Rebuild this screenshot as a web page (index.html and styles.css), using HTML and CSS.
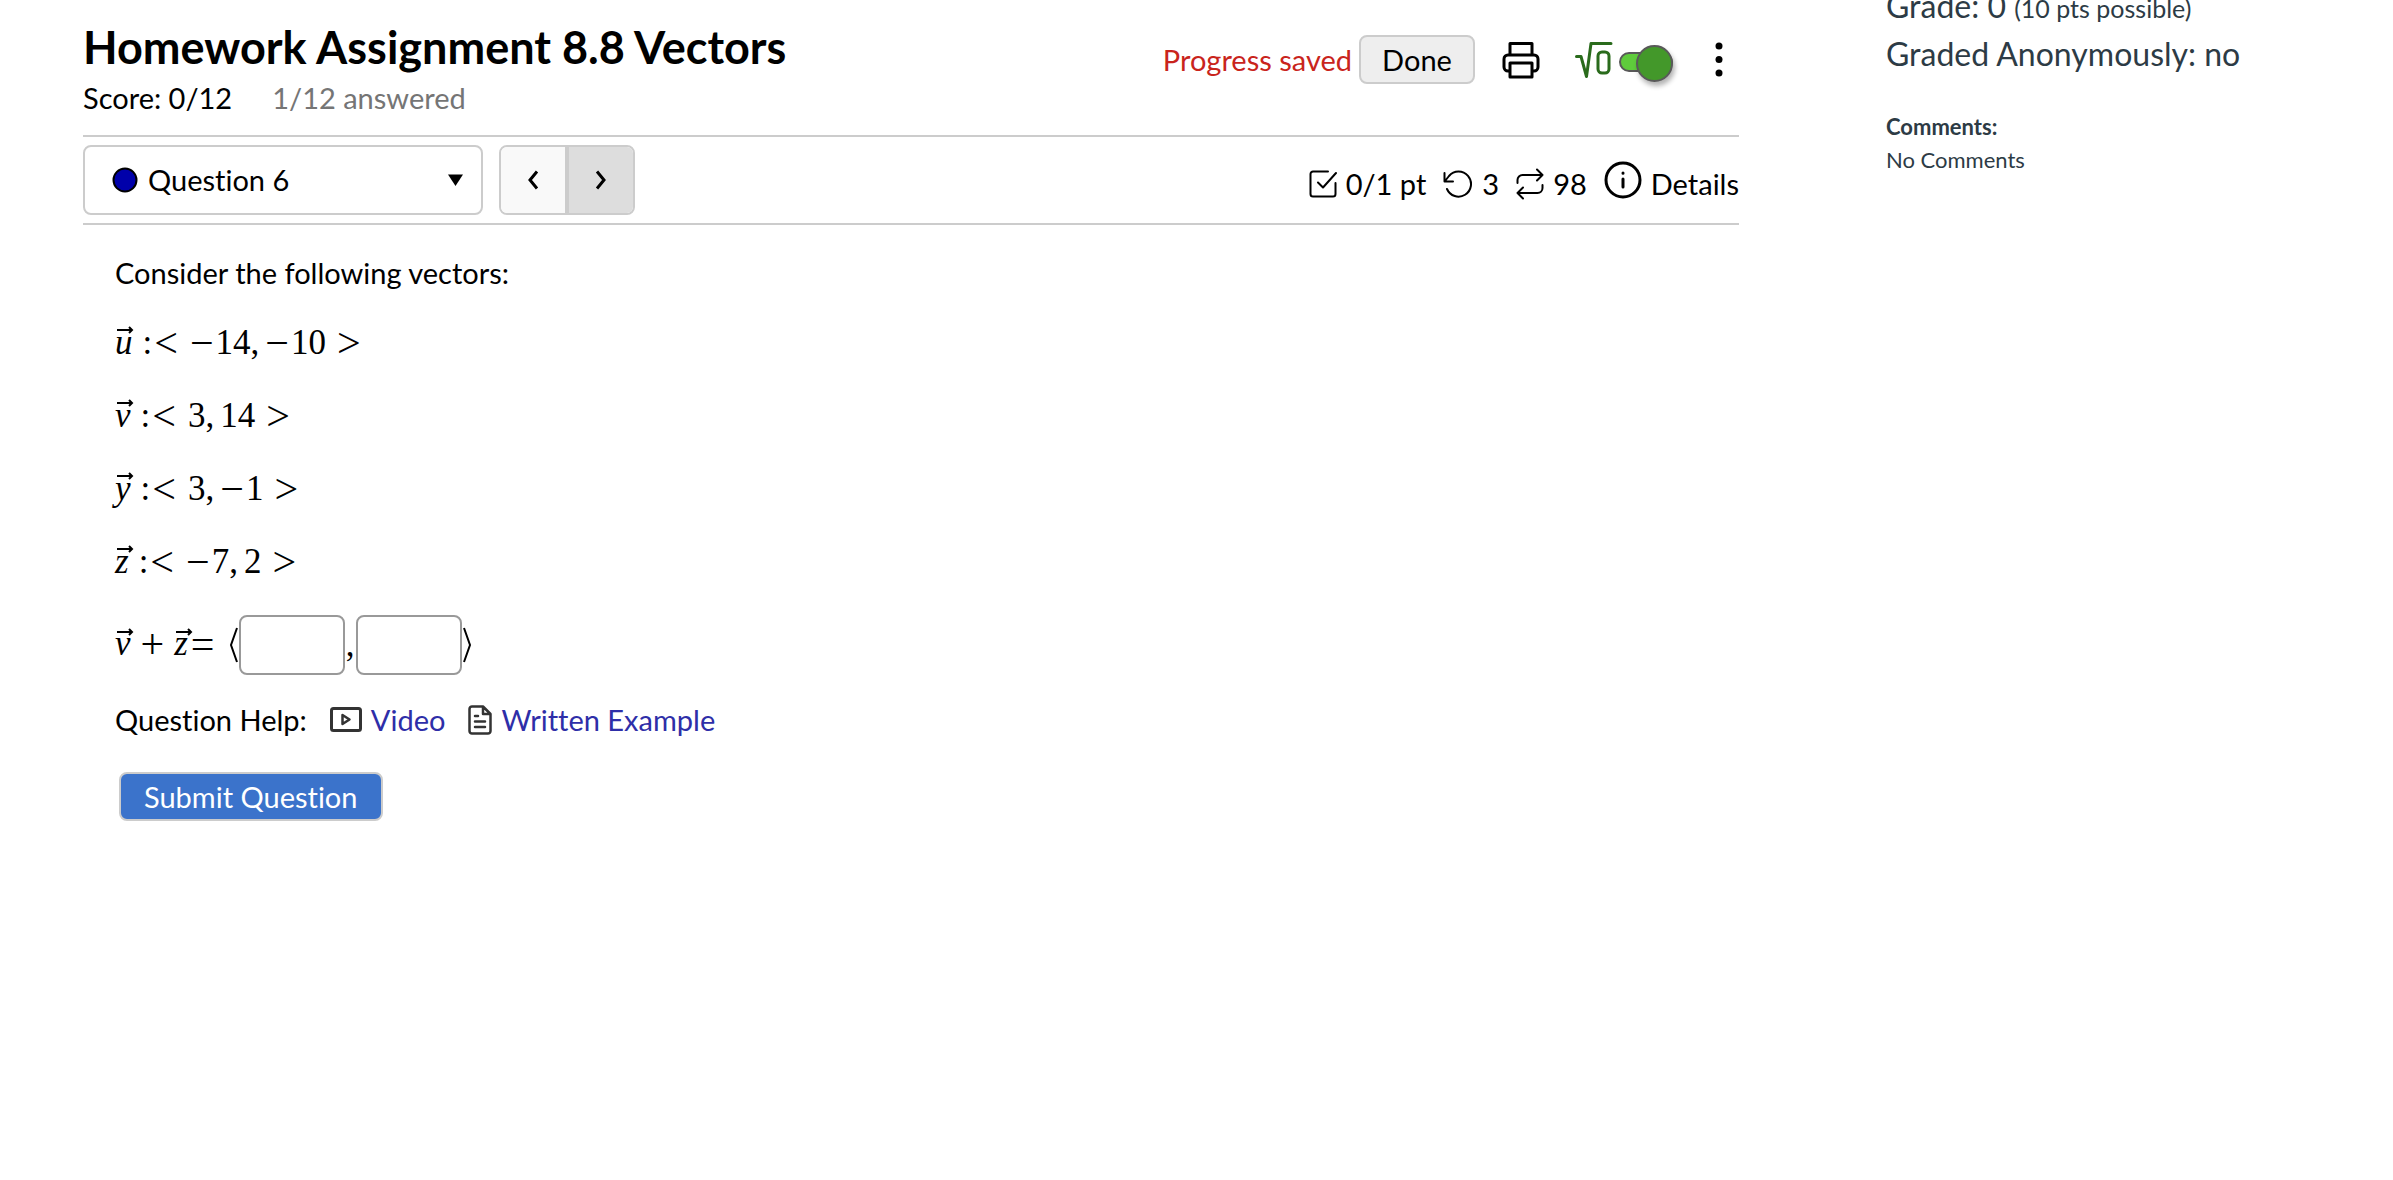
FILE: index.html
```html
<!DOCTYPE html>
<html lang="en">
<head>
    <meta charset="UTF-8">
    <meta name="viewport" content="width=device-width, initial-scale=1.0">
    <title>Homework Assignment 8.8 Vectors</title>
    <link rel="stylesheet" href="styles.css">
</head>
<body>
    <main class="assessment">
        <header class="assess-header">
            <div class="assess-title">
                <h1>Homework Assignment 8.8 Vectors</h1>
                <p class="score"><span>Score: 0/12</span><span class="answered">1/12 answered</span></p>
            </div>
            <div class="header-tools">
                <span class="saved">Progress saved</span>
                <button type="button" class="done-btn">Done</button>
                <button type="button" class="icon-btn print-btn" aria-label="Print">
                    <svg width="38" height="38" viewBox="0 0 38 38" fill="none" stroke="#000" stroke-width="3" stroke-linejoin="round">
                        <path d="M8 14V2.500h22V14M8 30H6a4 4 0 0 1-4-4v-8a4 4 0 0 1 4-4h26a4 4 0 0 1 4 4v8a4 4 0 0 1-4 4h-2"/>
                        <path d="M8 22h22v14H8z"/>
                    </svg>
                </button>
                <label class="math-toggle" for="mathEntry">
                    <svg width="38" height="38" viewBox="0 0 38 38" fill="none" stroke="#2a6b1c" stroke-width="3" stroke-linecap="round" stroke-linejoin="round">
                        <path d="M1.500 15.500h4.500l5.500 20 4.500-33h20"/>
                        <rect x="23" y="11" width="11" height="21" rx="4"/>
                    </svg>
                    <input type="checkbox" id="mathEntry" class="switch" aria-label="Equation editor" checked>
                </label>
                <button type="button" class="icon-btn" aria-label="More options">
                    <svg width="8" height="36" viewBox="0 0 8 36" fill="#000">
                        <circle cx="4" cy="4" r="3.500"/>
                        <circle cx="4" cy="17.500" r="3.500"/>
                        <circle cx="4" cy="31" r="3.500"/>
                    </svg>
                </button>
            </div>
        </header>

        <nav class="question-bar">
            <div class="question-select">
                <svg width="26" height="26" viewBox="0 0 26 26">
                    <circle cx="13" cy="13" r="11.500" fill="#00a" stroke="#000" stroke-width="2"/>
                </svg>
                <select aria-label="Select question">
                    <option>Question 6</option>
                </select>
                <svg width="15" height="12" viewBox="0 0 15 12"><path d="M0 .5h15L7.500 12z"/></svg>
            </div>
            <div class="pager">
                <button type="button" class="prev" aria-label="Previous question">
                    <svg width="12" height="20" viewBox="0 0 12 20" fill="none" stroke="#000" stroke-width="3"><path d="M10 1.500 3 10l7 8.500"/></svg>
                </button>
                <button type="button" class="next" aria-label="Next question">
                    <svg width="12" height="20" viewBox="0 0 12 20" fill="none" stroke="#000" stroke-width="3"><path d="m2 1.500 7 8.500-7 8.500"/></svg>
                </button>
            </div>
            <div class="stats">
                <span class="stat">
                    <svg width="28" height="28" viewBox="0 0 28 28" fill="none" stroke="#000" stroke-width="2" stroke-linecap="round" stroke-linejoin="round">
                        <path d="M19 1.500H4A2.500 2.500 0 0 0 1.500 4v20A2.500 2.500 0 0 0 4 26.500h20a2.500 2.500 0 0 0 2.500-2.500V13"/>
                        <path d="m9 12.500 5 5L27 3"/>
                    </svg>
                    0/1 pt
                </span>
                <span class="stat">
                    <svg width="30" height="28" viewBox="0 0 30 28" fill="none" stroke="#000" stroke-width="2" stroke-linecap="round" stroke-linejoin="round">
                        <path d="M1.500 3v8.500H10M2 11 6 6a12.500 12.500 0 1 1-2 13"/>
                    </svg>
                    3
                </span>
                <span class="stat">
                    <svg width="28" height="32" viewBox="0 0 28 32" fill="none" stroke="#000" stroke-width="2" stroke-linecap="round" stroke-linejoin="round">
                        <path d="m21 1.500 5.500 5.500L21 12.500M1.500 15v-3a5 5 0 0 1 5-5h20M7 30.500 1.500 25 7 19.500M26.500 17v3a5 5 0 0 1-5 5h-20"/>
                    </svg>
                    98
                </span>
                <button type="button" class="stat details">
                    <svg width="38" height="38" viewBox="0 0 38 38" fill="none" stroke="#000" stroke-width="3" stroke-linecap="round">
                        <circle cx="19" cy="19" r="17"/>
                        <path d="M19 18v8M19 12v.200"/>
                    </svg>
                    Details
                </button>
            </div>
        </nav>

        <section class="question">
            <p class="prompt">Consider the following vectors:</p>

            <p class="math"><i class="vec">u<svg viewBox="0 0 18 8"><path d="M1 4h15M13 1l3 3-3 3"/></svg></i><span class="colon">:</span><span class="op lt">&lt;</span><span class="op neg">−</span>14<span class="comma">,</span><span class="op neg">−</span>10<span class="op gt">&gt;</span></p>
            <p class="math"><i class="vec">v<svg viewBox="0 0 18 8"><path d="M1 4h15M13 1l3 3-3 3"/></svg></i><span class="colon">:</span><span class="op lt">&lt;</span>3<span class="comma">,</span>14<span class="op gt">&gt;</span></p>
            <p class="math"><i class="vec">y<svg viewBox="0 0 18 8"><path d="M1 4h15M13 1l3 3-3 3"/></svg></i><span class="colon">:</span><span class="op lt">&lt;</span>3<span class="comma">,</span><span class="op neg">−</span>1<span class="op gt">&gt;</span></p>
            <p class="math"><i class="vec">z<svg viewBox="0 0 18 8"><path d="M1 4h15M13 1l3 3-3 3"/></svg></i><span class="colon">:</span><span class="op lt">&lt;</span><span class="op neg">−</span>7<span class="comma">,</span>2<span class="op gt">&gt;</span></p>

            <div class="answer">
                <span class="math sum"><i class="vec">v<svg viewBox="0 0 18 8"><path d="M1 4h15M13 1l3 3-3 3"/></svg></i><span class="op plus">+</span><i class="vec">z<svg viewBox="0 0 18 8"><path d="M1 4h15M13 1l3 3-3 3"/></svg></i><span class="op equals">=</span></span>
                <svg class="angle" width="10" height="36" viewBox="0 0 10 36"><path d="M8 1 2 18l6 17"/></svg>
                <input type="text" aria-label="First component">
                <span class="math separator">,</span>
                <input type="text" aria-label="Second component">
                <svg class="angle" width="10" height="36" viewBox="0 0 10 36"><path d="M2 1l6 17-6 17"/></svg>
            </div>

            <div class="help">
                <span>Question Help:</span>
                <a href="#video">
                    <svg width="32" height="26" viewBox="0 0 32 26" fill="none" stroke="#333" stroke-width="3" stroke-linejoin="round">
                        <rect x="1.500" y="1.500" width="29" height="22" rx="2"/>
                        <path d="M12.500 8v9l7-4.500z" stroke-width="2.500"/>
                    </svg>
                    Video
                </a>
                <a href="#example">
                    <svg width="24" height="30" viewBox="0 0 24 30" fill="none" stroke="#333" stroke-width="2.500" stroke-linecap="round" stroke-linejoin="round">
                        <path d="M15 1.500H4A2.500 2.500 0 0 0 1.500 4v22A2.500 2.500 0 0 0 4 28.500h16a2.500 2.500 0 0 0 2.500-2.500V9zM15 1.500V9h7.500M7 11h3M7 16.500h10M7 22h10"/>
                    </svg>
                    Written Example
                </a>
            </div>

            <button type="submit" class="submit-btn">Submit Question</button>
        </section>
    </main>

    <aside class="grading">
        <p class="grade">Grade: 0 <small>(10 pts possible)</small></p>
        <p class="grade">Graded Anonymously: no</p>
        <h2>Comments:</h2>
        <p class="comment">No Comments</p>
    </aside>
</body>
</html>
```

FILE: styles.css
```css
* {
    margin: 0;
    padding: 0;
    box-sizing: border-box;
}

body {
    display: grid;
    grid-template-columns: minmax(0, 1fr) 424px;
    gap: 147px;
    padding: 0 83px;
    height: 100vh;
    overflow: hidden;
    background: #fff;
    color: #000;
    font-family: "Trebuchet MS", Lato, sans-serif;
    font-size: 29px;
    line-height: 42px;
    font-variant-ligatures: none;
}

button,
input,
select {
    font: inherit;
    color: inherit;
}

button {
    cursor: pointer;
}

svg {
    flex: none;
}

/* Header */
.assess-header {
    display: flex;
    justify-content: space-between;
    align-items: flex-start;
    padding: 17px 0 16px;
    border-bottom: 2px solid #ccc;
}

h1 {
    font-size: 45px;
    line-height: 60px;
    font-weight: bold;
}

.score {
    display: flex;
    gap: 40px;
}

.answered {
    color: #757575;
}

.header-tools {
    display: flex;
    align-items: center;
    margin-top: 18px;
    padding-right: 16px;
}

.saved {
    margin-right: 7px;
    color: #c9241c;
}

.done-btn {
    width: 116px;
    height: 49px;
    border: 2px solid #ccc;
    border-radius: 8px;
    background: #eee;
}

.icon-btn {
    display: flex;
    border: none;
    background: none;
}

.print-btn {
    margin: 0 35px 0 27px;
}

.math-toggle {
    display: flex;
    align-items: center;
    gap: 6px;
    margin-right: 42px;
}

.switch {
    appearance: none;
    position: relative;
    width: 54px;
    height: 20px;
    margin-top: 4px;
    border: 2px solid #595959;
    border-radius: 10px;
    background: #5fcb3c;
}

.switch::before {
    content: "";
    position: absolute;
    top: -9px;
    right: -2px;
    width: 33px;
    height: 33px;
    border: 2px solid #595959;
    border-radius: 50%;
    background: #43982a;
    box-shadow: 2px 4px 5px rgba(0, 0, 0, 0.3);
}

/* Question navigation */
.question-bar {
    display: flex;
    align-items: center;
    padding: 8px 0;
    border-bottom: 2px solid #ccc;
}

.question-select {
    display: flex;
    align-items: center;
    gap: 10px;
    width: 400px;
    height: 70px;
    padding: 0 18px 0 27px;
    border: 2px solid #ccc;
    border-radius: 8px;
}

.question-select select {
    appearance: none;
    flex: 1;
    border: none;
    background: none;
}

.pager {
    display: flex;
    margin-left: 16px;
    border: 2px solid #ccc;
    border-radius: 8px;
    overflow: hidden;
}

.pager button {
    display: flex;
    align-items: center;
    justify-content: center;
    width: 66px;
    height: 66px;
    border: none;
    background: #f9f9f9;
}

.pager .prev {
    border-right: 2px solid #ccc;
}

.pager .next {
    border-left: 2px solid #ccc;
    background: #ddd;
}

.stats {
    display: flex;
    align-items: center;
    gap: 17px;
    margin: 8px 0 0 auto;
}

.stat {
    display: flex;
    align-items: center;
    gap: 9px;
}

.details {
    border: none;
    background: none;
}

.details svg {
    margin-bottom: 8px;
}

/* Question */
.question {
    padding: 27px 32px;
}

.prompt {
    margin-bottom: 12px;
}

.math {
    font-family: "Liberation Serif", serif;
    font-size: 35px;
    line-height: 73px;
}

.vec {
    display: inline-block;
    position: relative;
}

/* arrow accent over the letter */
.vec svg {
    position: absolute;
    top: 20px;
    left: 1px;
    width: 18px;
    height: 8px;
    fill: none;
    stroke: #000;
    stroke-width: 2;
}

.op {
    font-size: 42px;
    line-height: 1;
    vertical-align: -3px;
}

.colon {
    margin: 0 2px 0 10px;
}

.lt {
    margin-right: 12px;
}

.neg {
    margin-right: 2px;
}

.gt {
    margin-left: 11px;
}

.comma {
    margin-right: 6px;
}

.answer {
    display: flex;
    align-items: center;
    margin-top: 17px;
}

.answer .sum {
    height: 60px;
    line-height: 58px;
}

.sum .vec svg {
    top: 13px;
}

.plus {
    margin: 0 10px;
}

.equals {
    margin: 0 14px 0 3px;
}

.angle {
    fill: none;
    stroke: #000;
    stroke-width: 2;
}

.answer input {
    width: 106px;
    height: 60px;
    padding: 0 10px;
    border: 2px solid #999;
    border-radius: 8px;
}

.separator {
    width: 11px;
    line-height: 60px;
    text-align: center;
}

.help {
    display: flex;
    align-items: center;
    gap: 23px;
    margin-top: 24px;
}

.help a {
    display: flex;
    align-items: center;
    gap: 9px;
    color: #2e2ea8;
    text-decoration: none;
}

.submit-btn {
    height: 49px;
    margin: 31px 4px;
    padding: 0 23px;
    border: 2px solid #ccc;
    border-radius: 8px;
    background: #3b73cb;
    color: #fff;
}

/* Grading sidebar */
.grading {
    margin-top: -18px;
    color: #2d3b45;
    font-family: Lato, sans-serif;
}

.grade {
    font-size: 32px;
    line-height: 48px;
}

.grade small {
    font-size: 25px;
    line-height: 1;
}

.grading h2 {
    margin-top: 32px;
    font-size: 22px;
    line-height: 33px;
}

.comment {
    font-size: 22px;
    line-height: 33px;
}
```
